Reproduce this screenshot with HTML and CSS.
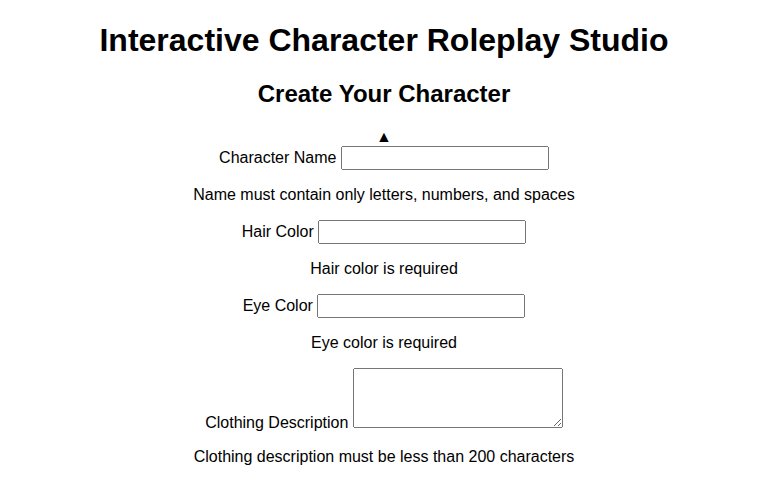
FILE: index.html
```html
<!DOCTYPE html>
<html lang="en">
<head>
    <meta charset="UTF-8">
    <meta name="viewport" content="width=device-width, initial-scale=1.0">
    <title>Interactive Character Roleplay Studio</title>
    <link rel="stylesheet" href="styles.css">
</head>
<body>
    <h1>Interactive Character Roleplay Studio</h1>

    <div class="creator">
        <h2>Create Your Character</h2>
        <div class="toggle">▲</div>

        <form class="character-form">
            <div class="field">
                <label for="char-name">Character Name</label>
                <input type="text" id="char-name">
            </div>
            <p class="error">Name must contain only letters, numbers, and spaces</p>

            <div class="field">
                <label for="hair-color">Hair Color</label>
                <input type="text" id="hair-color">
            </div>
            <p class="error">Hair color is required</p>

            <div class="field">
                <label for="eye-color">Eye Color</label>
                <input type="text" id="eye-color">
            </div>
            <p class="error">Eye color is required</p>

            <div class="field">
                <label for="clothing">Clothing Description</label>
                <textarea id="clothing"></textarea>
            </div>
            <p class="error">Clothing description must be less than 200 characters</p>
        </form>
    </div>
</body>
</html>
```

FILE: styles.css
```css
body {
    margin: 0 8px 8px;
    font-family: 'Liberation Sans', Arial, sans-serif;
    text-align: center;
    color: #000;
    background: #fff;
}

h1 {
    font-size: 32px;
    margin: 22px 0 21px;
}

h2 {
    font-size: 24px;
}

.toggle {
    font-size: 16px;
}

.field input,
.field textarea {
    font: inherit;
}

.field input {
    width: 200px;
}

.field textarea {
    width: 204px;
    height: 54px;
    padding: 2px;
    vertical-align: baseline;
}

.error {
    margin: 16px 0;
}
```
